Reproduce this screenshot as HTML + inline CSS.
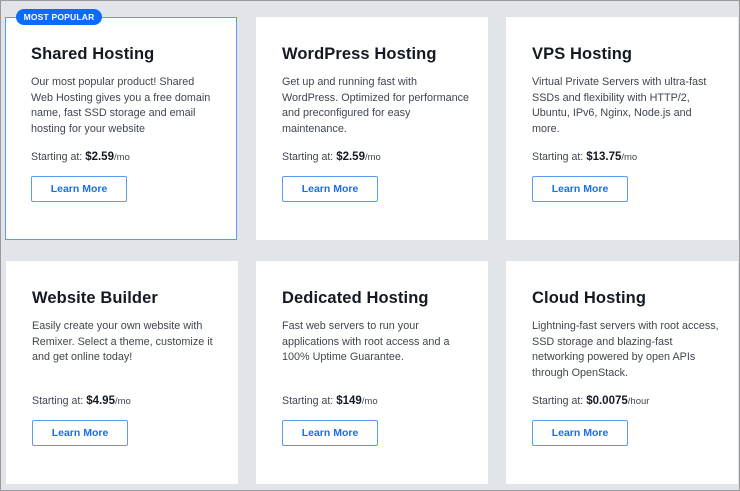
<!DOCTYPE html>
<html><head><style>
*{margin:0;padding:0;box-sizing:border-box}
body{width:740px;height:491px;background:#e1e4e8;font-family:"Liberation Sans",sans-serif;position:relative;overflow:hidden}
.frame{position:absolute;left:0;top:0;width:740px;height:491px;border:1px solid #9a9a9a;pointer-events:none}
.c{position:absolute;width:232px;height:223px;background:#fff}
.c.p{border:1px solid #5b9cf0}
.badge{position:absolute;left:16px;top:9px;width:86px;height:16px;background:#0a6cff;border-radius:8px;color:#fff;font-size:8.5px;font-weight:bold;text-align:center;line-height:16px;letter-spacing:.2px}
h2{position:absolute;left:26px;top:28px;font-size:16.5px;font-weight:bold;color:#141a22;letter-spacing:.1px;white-space:nowrap}
.d{position:absolute;left:26px;top:58px;font-size:10.8px;line-height:15.6px;color:#3f4650;white-space:nowrap}
.s{position:absolute;left:26px;top:134px;font-size:10.6px;color:#3f4650}
.s b{color:#141a22;font-size:11.5px}
.s small{font-size:9.5px}
.btn{position:absolute;left:26px;top:159px;width:96px;height:26px;border:1px solid #5b9cf0;border-radius:2px;color:#1a6ee8;font-size:10.5px;font-weight:bold;text-align:center;line-height:24px}
.p h2,.p .d,.p .s,.p .btn{margin-left:-1px;margin-top:-1px}
</style></head><body>
<div class="c p" style="left:5px;top:17px">
<h2>Shared Hosting</h2><div class="d">Our most popular product! Shared<br>Web Hosting gives you a free domain<br>name, fast SSD storage and email<br>hosting for your website</div><div class="s">Starting at: <b>$2.59</b><small>/mo</small></div><div class="btn">Learn More</div></div>
<div class="badge">MOST POPULAR</div>
<div class="c" style="left:256px;top:17px">
<h2>WordPress Hosting</h2><div class="d">Get up and running fast with<br>WordPress. Optimized for performance<br>and preconfigured for easy<br>maintenance.</div><div class="s">Starting at: <b>$2.59</b><small>/mo</small></div><div class="btn">Learn More</div></div>
<div class="c" style="left:506px;top:17px">
<h2>VPS Hosting</h2><div class="d">Virtual Private Servers with ultra-fast<br>SSDs and flexibility with HTTP/2,<br>Ubuntu, IPv6, Nginx, Node.js and<br>more.</div><div class="s">Starting at: <b>$13.75</b><small>/mo</small></div><div class="btn">Learn More</div></div>
<div class="c" style="left:6px;top:261px">
<h2>Website Builder</h2><div class="d">Easily create your own website with<br>Remixer. Select a theme, customize it<br>and get online today!</div><div class="s">Starting at: <b>$4.95</b><small>/mo</small></div><div class="btn">Learn More</div></div>
<div class="c" style="left:256px;top:261px">
<h2>Dedicated Hosting</h2><div class="d">Fast web servers to run your<br>applications with root access and a<br>100% Uptime Guarantee.</div><div class="s">Starting at: <b>$149</b><small>/mo</small></div><div class="btn">Learn More</div></div>
<div class="c" style="left:506px;top:261px">
<h2>Cloud Hosting</h2><div class="d">Lightning-fast servers with root access,<br>SSD storage and blazing-fast<br>networking powered by open APIs<br>through OpenStack.</div><div class="s">Starting at: <b>$0.0075</b><small>/hour</small></div><div class="btn">Learn More</div></div>
<div class="frame"></div>
</body></html>
